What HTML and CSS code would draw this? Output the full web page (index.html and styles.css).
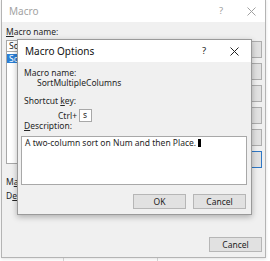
FILE: index.html
```html
<!DOCTYPE html>
<html>
<head>
<meta charset="utf-8">
<link rel="stylesheet" href="styles.css">
</head>
<body>
<div class="sheet">
  <div class="macro">
    <div class="titlebar inactive">
      <span class="title">Macro</span>
      <span class="help">?</span>
      <svg class="close" width="9" height="9" viewBox="0 0 9 9"><path d="M0.5 0.5L8.5 8.5M8.5 0.5L0.5 8.5" stroke="#a0a0a0" stroke-width="1" fill="none"/></svg>
    </div>
    <div class="mbody">
      <div class="mleft">
        <div class="label"><u>M</u>acro name:</div>
        <div class="namebox">SortMultipleColumns</div>
        <div class="list"><div class="item sel">SortMultipleColumns</div></div>
        <div class="label gap-macros">M<u>a</u>cros in:</div>
        <div class="label gap-desc">D<u>e</u>scription</div>
      </div>
      <div class="mright">
        <div class="sbtn"></div>
        <div class="sbtn"></div>
        <div class="sbtn"></div>
        <div class="sbtn"></div>
        <div class="sbtn"></div>
        <div class="sbtn focus"></div>
      </div>
    </div>
    <div class="mfoot"><div class="btn">Cancel</div></div>
  </div>

  <div class="options">
    <div class="titlebar">
      <span class="title">Macro Options</span>
      <span class="help dark">?</span>
      <svg class="close dark" width="9" height="9" viewBox="0 0 9 9"><path d="M0.5 0.5L8.5 8.5M8.5 0.5L0.5 8.5" stroke="#222" stroke-width="1" fill="none"/></svg>
    </div>
    <div class="obody">
      <div class="label">Macro name:</div>
      <div class="value">SortMultipleColumns</div>
      <div class="label gap-key">Shortcut <u>k</u>ey:</div>
      <div class="ctrlrow"><span class="ctrl">Ctrl+</span><span class="keybox">s</span></div>
      <div class="label"><u>D</u>escription:</div>
      <div class="desc">A two-column sort on Num and then Place. <span class="caret"></span></div>
      <div class="obtns"><div class="btn">OK</div><div class="btn">Cancel</div></div>
    </div>
  </div>
</div>
</body>
</html>
```

FILE: styles.css
```css
html, body {
  margin: 0;
  padding: 0;
}
body {
  width: 270px;
  height: 261px;
  overflow: hidden;
  background: #ffffff linear-gradient(90deg, transparent 63px, #d8d8d8 63px, #d8d8d8 64px, transparent 64px, transparent 157px, #d8d8d8 157px, #d8d8d8 158px, transparent 158px);
  font-family: "Noto Sans", "Liberation Sans", sans-serif;
  font-size: 8.5px;
  color: #262626;
}
.sheet {
  position: relative;
  width: 270px;
  height: 261px;
}
u { text-decoration-thickness: 1px; text-underline-offset: 1px; }

/* back dialog */
.macro {
  box-sizing: border-box;
  margin: -1px 0 0 1px;
  width: 265px;
  height: 259px;
  border: 1px solid #b4b4b4;
  background: #f0f0f0;
  display: flex;
  flex-direction: column;
  box-shadow: 0 1px 3px rgba(0,0,0,0.12);
}
.titlebar {
  position: relative;
  height: 22px;
  background: #ffffff;
  flex: none;
}
.titlebar .title {
  position: absolute;
  left: 7px;
  top: 5px;
  font-size: 10px;
  line-height: 12px;
}
.titlebar.inactive .title { color: #a3a3a3; }
.help {
  position: absolute;
  font-size: 9.5px;
  line-height: 12px;
  color: #a0a0a0;
}
.macro .help { left: 217px; top: 5px; }
.macro .close { position: absolute; left: 245px; top: 7px; }
.help.dark { color: #222; }

.mbody {
  flex: 1;
  display: flex;
  justify-content: space-between;
  padding: 5px 3px 0 4px;
}
.mleft {
  width: 172px;
}
.label {
  line-height: 10px;
  height: 10px;
  white-space: nowrap;
}
.namebox {
  box-sizing: border-box;
  margin-top: 3px;
  height: 12px;
  border: 1px solid #a8a8a8;
  background: #fff;
  padding-left: 2px;
  line-height: 10px;
  white-space: nowrap;
  overflow: hidden;
}
.list {
  box-sizing: border-box;
  height: 112px;
  border: 1px solid #a8a8a8;
  border-top: none;
  background: #fff;
  padding: 2px 0 0 0;
}
.item {
  line-height: 9px;
  height: 9px;
  padding-left: 2px;
  white-space: nowrap;
}
.item.sel { background: #2b7fd6; color: #fff; }
.gap-macros { margin-top: 13px; }
.gap-desc { margin-top: 4px; }

.mright {
  width: 75px;
  padding-top: 14px;
  display: flex;
  flex-direction: column;
  gap: 5px;
}
.sbtn {
  box-sizing: border-box;
  height: 17px;
  background: #e1e1e1;
  border: 1px solid #adadad;
}
.sbtn.focus { border-color: #2f78c5; }

.mfoot {
  display: flex;
  justify-content: flex-end;
  padding: 0 3px 5px 0;
}
.btn {
  box-sizing: border-box;
  width: 53px;
  height: 15px;
  background: #e1e1e1;
  border: 1px solid #b6b6b6;
  text-align: center;
  line-height: 13px;
  color: #222;
}

/* front dialog (overlay) */
.options {
  position: absolute;
  left: 17px;
  top: 40px;
  box-sizing: border-box;
  width: 235px;
  height: 176px;
  border: 1px solid #9a9a9a;
  background: #f0f0f0;
  box-shadow: 0 2px 6px rgba(0,0,0,0.28);
  display: flex;
  flex-direction: column;
}
.options .titlebar .title { left: 7px; top: 5px; color: #111; }
.options .help { left: 184px; top: 5px; }
.options .close { position: absolute; left: 212px; top: 7px; }

.obody {
  padding: 6px 4px 0 6px;
}
.value {
  line-height: 10px;
  padding-left: 13px;
}
.gap-key { margin-top: 8px; }
.ctrlrow {
  margin-top: 3px;
  height: 12px;
  display: flex;
  align-items: flex-start;
}
.ctrl {
  margin-left: 34px;
  margin-top: 2px;
  line-height: 10px;
  width: 21px;
}
.keybox {
  box-sizing: border-box;
  width: 13px;
  height: 13px;
  border: 1px solid #a8a8a8;
  background: #fff;
  line-height: 10px;
  padding-left: 3px;
}
.desc {
  box-sizing: border-box;
  margin: 5px 0 0 -3px;
  height: 49px;
  border: 1px solid #a8a8a8;
  background: #fff;
  padding: 1px 0 0 3px;
  line-height: 10px;
  white-space: nowrap;
}
.caret {
  display: inline-block;
  width: 3px;
  height: 8px;
  background: #000;
  vertical-align: -1px;
}
.obtns {
  margin-top: 9px;
  display: flex;
  justify-content: flex-end;
  gap: 7px;
  padding-right: 1px;
}
```
